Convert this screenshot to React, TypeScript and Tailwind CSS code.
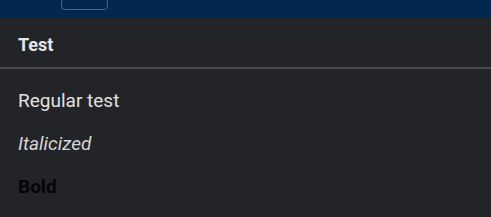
import React from 'react';

export default function App() {
  return (
    <div className="w-[491px] h-[217px] bg-[#222428] flex flex-col overflow-hidden" style={{ fontFamily: 'Roboto, "Liberation Sans", sans-serif' }}>
      <div className="h-[18px] bg-[#022850] shrink-0 flex">
        <div className="ml-[61px] w-[47px] h-[12px] -mt-[2px] border border-[#4a6288] rounded-[4px]" />
      </div>
      <div className="h-[49px] flex items-center pt-[4px] px-[18px] text-[#e6e6e6] font-bold text-[18px]">Test</div>
      <div className="h-[2px] bg-[#4b4c4f]" />
      <div className="flex flex-col px-[18px] pt-[20px] gap-[20px]">
        <div className="text-[19px] leading-[23px] text-[#e1e1e1]">Regular test</div>
        <div className="text-[19px] leading-[23px] text-[#d6d6d6] italic">Italicized</div>
        <div className="text-[19px] leading-[23px] text-[#050505] font-bold">Bold</div>
      </div>
    </div>
  );
}
